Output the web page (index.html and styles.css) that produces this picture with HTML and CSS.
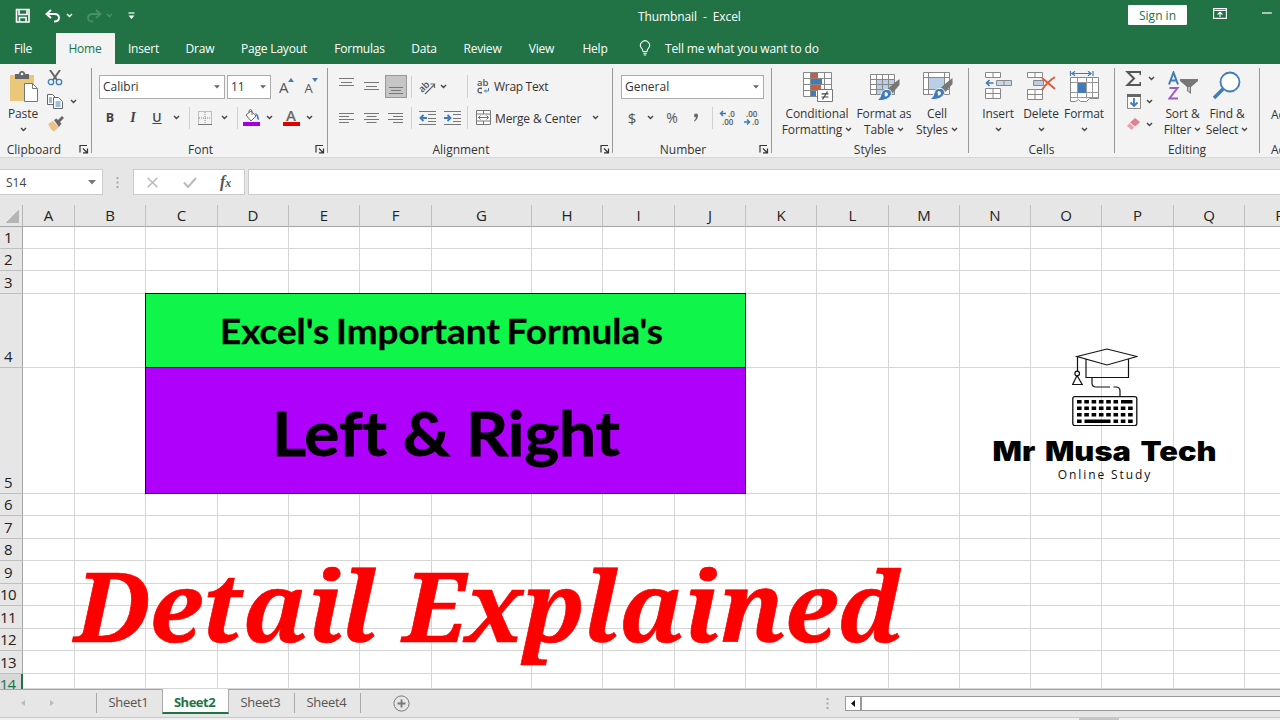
FILE: index.html
```
<!DOCTYPE html>
<html lang="en">
<head>
  <meta charset="UTF-8">
  <title>Thumbnail - Excel</title>
  <link rel="stylesheet" href="styles.css">
</head>
<body>

  <svg class="defs" width="0" height="0">
    <symbol id="chev" viewBox="0 0 7 5"><path d="M1 1l2.500 2.500L6 1" fill="none" stroke="currentColor" stroke-width="1.400"/></symbol>
    <symbol id="tri" viewBox="0 0 6 4"><path d="M0 .3h6L3 3.600z" fill="currentColor"/></symbol>
    <symbol id="launch" viewBox="0 0 10 10"><path d="M1 8.500V1.500h7M4 4.500l4 4M8.500 4.500v4.300h-4.500" fill="none" stroke="#333" stroke-width="1.200"/></symbol>
    <symbol id="brush" viewBox="0 0 24 24"><path d="M23.500 1v6l-7 8-5-4 8-7z" fill="#777"/><path d="M9 11.500q7-1 6.500 5-3 7-15 6 4-2 4.500-6 1-5 4-5z" fill="#3f7cb8" stroke="#f2f2f2"/><path d="M9 14q3 0 3 3-1 1.500-3 1.500-1-2 0-4.500z" fill="#fff"/></symbol>
  </svg>

  <header class="titlebar">
    <div class="quick">
      <svg width="16" height="16" viewBox="0 0 16 16"><path d="M1.500 1.500h12.500v12.500H1.500zM4 1.500v5h8v-5M4.500 14v-4.500h6.500V14" fill="none" stroke="#fff" stroke-width="1.600"/></svg>
      <svg class="undo" width="16" height="14" viewBox="0 0 16 14"><path d="M6 1L1.500 5 6 9M2 5h7.500q4.500 0 4.500 3.800T9 12.500" fill="none" stroke="#fff" stroke-width="1.900"/></svg>
      <svg class="chev" width="7" height="5"><use href="#chev"/></svg>
      <svg class="redo" width="16" height="14" viewBox="0 0 16 14"><path d="M10 1l4.500 4L10 9M14 5H6.500Q2 5 2 8.800T7 12.500" fill="none" stroke="currentColor" stroke-width="1.800"/></svg>
      <svg class="chev dim" width="7" height="5"><use href="#chev"/></svg>
      <svg class="more" width="7" height="8" viewBox="0 0 7 8"><path d="M0.500 1h6" stroke="#fff" stroke-width="1.200"/><path d="M.5 3.500h6l-3 3.500z" fill="#fff"/></svg>
    </div>
    <div class="doc-name">Thumbnail&nbsp; -&nbsp; Excel</div>
    <button class="signin">Sign in</button>
    <svg class="ribbon-opt" width="14" height="11" viewBox="0 0 14 11"><path d="M.6.600h12.800v9.800H.6zM.6 2.500h12.800M7 9V4.500M4.500 6.500L7 4.300l2.500 2.200" fill="none" stroke="#fff" stroke-width="1.100"/></svg>
    <svg class="minimize" width="10" height="2"><path d="M0 1h10" stroke="#fff" stroke-width="1.200"/></svg>
  </header>

  <nav class="tabs">
    <a class="tab file">File</a>
    <a class="tab home">Home</a>
    <a class="tab insert">Insert</a>
    <a class="tab draw">Draw</a>
    <a class="tab layout">Page Layout</a>
    <a class="tab formulas">Formulas</a>
    <a class="tab data">Data</a>
    <a class="tab review">Review</a>
    <a class="tab view">View</a>
    <a class="tab help">Help</a>
    <svg class="bulb" width="12" height="16" viewBox="0 0 12 16"><path d="M4 11.500Q4 9.500 2.500 8.200A4.500 4.500 0 1 1 9.500 8.200Q8 9.500 8 11.500zM4.200 13.200h3.600M4.800 15h2.400" fill="none" stroke="#fff" stroke-width="1.100"/></svg>
    <span class="tell">Tell me what you want to do</span>
  </nav>

  <section class="ribbon">
    <!-- Clipboard -->
    <div class="group clipboard">
      <div class="body">
        <div class="big">
          <svg width="30" height="32" viewBox="0 0 30 32"><path d="M1 4h24v26H1z" fill="#ebc77c"/><path d="M6 3h4q0-3 3-3t3 3h4v5H6z" fill="#666"/><circle cx="13" cy="3" r="1.300" fill="#f2f2f2"/><path d="M15.500 12.500h8l5 5v13h-13z" fill="#fff" stroke="#777"/><path d="M23.500 12.500v5h5" fill="none" stroke="#777"/></svg>
          <span>Paste</span>
          <svg class="chev" width="7" height="5"><use href="#chev"/></svg>
        </div>
        <div class="stack">
          <div class="cell"><svg width="16" height="16" viewBox="0 0 16 16"><path d="M3 0l7 10M13 0L6 10" stroke="#666" stroke-width="2"/><circle cx="4" cy="12" r="2.700" fill="none" stroke="#3f7cb8" stroke-width="1.300"/><circle cx="12" cy="12" r="2.700" fill="none" stroke="#3f7cb8" stroke-width="1.300"/></svg></div>
          <div class="cell"><svg width="16" height="15" viewBox="0 0 16 15"><path d="M.5.500h5l3 3v7h-8z" fill="#fff" stroke="#666"/><path d="M6.500 3.500h5l4 4v7h-9z" fill="#fff" stroke="#666"/><path d="M2 4h3M2 6h3M2 8h3M8.500 8h5M8.500 10h5M8.500 12h5" stroke="#3f7cb8"/></svg><svg class="chev" width="7" height="5"><use href="#chev"/></svg></div>
          <div class="cell"><svg width="17" height="16" viewBox="0 0 17 16"><path d="M1 8l5-3 6 6-5 4.500q-3-1-6-7.500z" fill="#ebc38a"/><path d="M7 4l2.500-1.500L11 4l4-4 2 2-4 4 1.500 1.500L12 11z" fill="#666"/></svg></div>
        </div>
      </div>
      <div class="title"><span>Clipboard</span><svg width="10" height="10"><use href="#launch"/></svg></div>
    </div>

    <!-- Font -->
    <div class="group font">
      <div class="body rows">
        <div class="row">
          <div class="select family">Calibri<svg width="6" height="4"><use href="#tri"/></svg></div>
          <div class="select size">11<svg width="6" height="4"><use href="#tri"/></svg></div>
          <span class="grow">A<svg width="6" height="4" viewBox="0 0 6 4"><path d="M0 4l3-4 3 4z" fill="#3f7cb8"/></svg></span>
          <span class="grow shrink">A<svg width="6" height="4" viewBox="0 0 6 4"><path d="M0 0h6L3 4z" fill="#3f7cb8"/></svg></span>
        </div>
        <div class="row tools">
          <b>B</b>
          <i>I</i>
          <u>U</u>
          <svg class="chev" width="7" height="5"><use href="#chev"/></svg>
          <span class="sep"></span>
          <svg width="14" height="14" viewBox="0 0 14 14"><path d="M.5.500h13v13H.5zM7 1v12M1 7h12" fill="none" stroke="#888" stroke-dasharray="1 1"/><path d="M0 13.500h14" stroke="#777"/></svg>
          <svg class="chev" width="7" height="5"><use href="#chev"/></svg>
          <span class="sep"></span>
          <svg width="17" height="17" viewBox="0 0 17 17"><path d="M3 6l5-4 5 5-5 5z" fill="#fff" stroke="#666"/><path d="M6 4V1.500q1.500-2 3 0V6" fill="none" stroke="#666"/><path d="M12 4q4 1 4 7-2 0-2-3z" fill="#3f7cb8"/><path d="M0 13h17v4H0z" fill="#a000e0"/></svg>
          <svg class="chev" width="7" height="5"><use href="#chev"/></svg>
          <span class="font-color">A</span>
          <svg class="chev" width="7" height="5"><use href="#chev"/></svg>
        </div>
      </div>
      <div class="title"><span>Font</span><svg width="10" height="10"><use href="#launch"/></svg></div>
    </div>

    <!-- Alignment -->
    <div class="group alignment">
      <div class="body">
        <div class="rows align-left">
          <div class="row">
            <svg width="15" height="23" viewBox="0 0 15 23"><path d="M0 3.500h15M2 7.500h11M0 10.500h15" stroke="#777"/></svg>
            <svg width="15" height="23" viewBox="0 0 15 23"><path d="M0 7.500h15M2 11.500h11M0 14.500h15" stroke="#777"/></svg>
            <svg class="active" width="22" height="23" viewBox="0 0 22 23"><path d="M4 12.500h14M6 15.500h10M4 18.500h14" stroke="#777"/></svg>
            <span class="sep"></span>
            <svg class="loose" width="17" height="17" viewBox="0 0 17 17"><text class="tiny-ab" x="-1" y="11" transform="rotate(-45 6 8)">ab</text><path d="M6 16l9-9M11.500 6h4v4" fill="none" stroke="#666" stroke-width="1.200"/></svg>
            <svg class="chev" width="7" height="5"><use href="#chev"/></svg>
          </div>
          <div class="row second">
            <svg width="15" height="12" viewBox="0 0 15 12"><path d="M0 1.500h15M0 4.500h10M0 7.500h15M0 10.500h10" stroke="#777"/></svg>
            <svg width="15" height="12" viewBox="0 0 15 12"><path d="M0 1.500h15M2.500 4.500h10M0 7.500h15M2.500 10.500h10" stroke="#777"/></svg>
            <svg width="15" height="12" viewBox="0 0 15 12"><path d="M0 1.500h15M5 4.500h10M0 7.500h15M5 10.500h10" stroke="#777"/></svg>
            <span class="sep"></span>
            <svg width="17" height="14" viewBox="0 0 17 14"><path d="M0 .5h17M9 3.500h8M9 7.500h8M9 10.500h8M0 13.500h17" stroke="#777"/><path d="M8 7H1.500M4.500 4l-3 3 3 3" fill="none" stroke="#3f7cb8" stroke-width="1.900"/></svg>
            <svg width="17" height="14" viewBox="0 0 17 14"><path d="M0 .5h17M9 3.500h8M9 7.500h8M9 10.500h8M0 13.500h17" stroke="#777"/><path d="M0 7h6.500M3.500 4l3 3-3 3" fill="none" stroke="#3f7cb8" stroke-width="1.900"/></svg>
          </div>
        </div>
        <div class="rows align-right">
          <div class="row">
            <svg class="loose" width="13" height="17" viewBox="0 0 13 17"><text class="tiny-ab" x="0" y="8">ab</text><path d="M5 10.500Q1 9.500 1 12.500T5 14.500" fill="none" stroke="#555" stroke-width="1.300"/><path d="M11.500 10v3H7.500M9 11.500L7.500 13 9 14.500" fill="none" stroke="#3f7cb8"/></svg>
            <span class="wrap">Wrap Text</span>
          </div>
          <div class="row second">
            <svg width="15" height="15" viewBox="0 0 15 15"><path d="M.5.500h14v14H.5zM.5 4h14M.5 11h14M7.500.500V4M7.500 11v3.500" fill="#fff" stroke="#777"/><path d="M2.500 7.500h10M4.500 5.500l-2 2 2 2M10.500 5.500l2 2-2 2" fill="none" stroke="#3f7cb8"/></svg>
            <span class="merge">Merge &amp; Center</span>
            <svg class="chev" width="7" height="5"><use href="#chev"/></svg>
          </div>
        </div>
      </div>
      <div class="title"><span>Alignment</span><svg width="10" height="10"><use href="#launch"/></svg></div>
    </div>

    <!-- Number -->
    <div class="group number">
      <div class="body rows">
        <div class="row"><div class="select format">General<svg width="6" height="4"><use href="#tri"/></svg></div></div>
        <div class="row tools">
          <span class="sym">$</span>
          <svg class="chev" width="7" height="5"><use href="#chev"/></svg>
          <span class="sym percent">%</span>
          <svg width="6" height="9" viewBox="0 0 6 9"><path d="M1 2.500a2 2 0 1 1 4 0Q5 6 1.500 8.500l-.5-1Q3 6 3 4.500 1 4.500 1 2.500z" fill="#666"/></svg>
          <span class="sep"></span>
          <svg class="loose" width="16" height="18" viewBox="0 0 16 18"><text class="dec" x="9" y="8">.0</text><text class="dec" x="3" y="16">.00</text><path d="M7 4.500H1.500M4 2L1.500 4.500 4 7" fill="none" stroke="#3f7cb8" stroke-width="1.500"/></svg>
          <svg class="loose" width="16" height="18" viewBox="0 0 16 18"><text class="dec" x="3" y="8">.00</text><text class="dec" x="9" y="16">.0</text><path d="M1 13h5.500M4 10.500L6.500 13 4 15.500" fill="none" stroke="#3f7cb8" stroke-width="1.500"/></svg>
        </div>
      </div>
      <div class="title"><span>Number</span><svg width="10" height="10"><use href="#launch"/></svg></div>
    </div>

    <!-- Styles -->
    <div class="group styles">
      <div class="body">
        <div class="big conditional">
          <svg width="31" height="32" viewBox="0 0 31 32"><path d="M.5 1.500h28v24H.5z" fill="#fff"/><path d="M8 1.500h7v6H8zM8 14h10v5H8z" fill="#cb5c44"/><path d="M8 8h11v6H8zM8 20h5v5H8z" fill="#3f7cb8"/><path d="M.5 1.500h28v24H.5zM.5 7.500h28M.5 13.500h28M.5 19.500h28M7.500 1.500v24M21.500 1.500v24" fill="none" stroke="#888"/><path d="M14.500 18.500h15v12h-15z" fill="#fff" stroke="#777"/><path d="M18.500 22.800h7M18.500 26h7M24.500 20.500l-5 8" stroke="#444" stroke-width="1.200"/></svg>
          <span>Conditional<br>Formatting <svg class="chev" width="7" height="5"><use href="#chev"/></svg></span>
        </div>
        <div class="big">
          <svg class="table-icon" width="31" height="32" viewBox="0 0 31 32"><path d="M.5 3.500h24v20H.5z" fill="#fff"/><path d="M7 9h18v15H7z" fill="#b9cfe6"/><path d="M.5 3.500h24v20H.5zM.5 8.500h24M.5 13.500h24M.5 18.500h24M6.500 3.500v20M12.500 3.500v20M18.500 3.500v20" fill="none" stroke="#888"/><use href="#brush" x="6" y="7" width="24" height="24"/></svg>
          <span>Format as<br>Table <svg class="chev" width="7" height="5"><use href="#chev"/></svg></span>
        </div>
        <div class="big">
          <svg class="table-icon" width="31" height="32" viewBox="0 0 31 32"><path d="M.5 1.500h26v22H.5zM.5 6.500h26M.5 18.500h26M5.500 1.500v22M21.500 1.500v22" fill="#fff" stroke="#888"/><path d="M6 7h15v11H6z" fill="#b9cfe6"/><use href="#brush" x="6" y="6" width="24" height="24"/></svg>
          <span>Cell<br>Styles <svg class="chev" width="7" height="5"><use href="#chev"/></svg></span>
        </div>
      </div>
      <div class="title"><span>Styles</span></div>
    </div>

    <!-- Cells -->
    <div class="group cells">
      <div class="body">
        <div class="big">
          <svg width="28" height="32" viewBox="0 0 28 32"><path d="M1.500 1.500h15v5h-15zM9 1.500v5M1.500 17.500h15v10h-15zM1.500 22.500h15M9 17.500v10" fill="#fff" stroke="#888"/><path d="M12.500 9.500h15v5h-15zM20 9.500v5" fill="#c6d7e8" stroke="#888"/><path d="M9.500 12H2.500M5.500 9l-3 3 3 3" fill="none" stroke="#3f7cb8" stroke-width="1.700"/></svg>
          <span>Insert</span>
          <svg class="chev" width="7" height="5"><use href="#chev"/></svg>
        </div>
        <div class="big">
          <svg width="30" height="32" viewBox="0 0 30 32"><path d="M1.500 1.500h15v5h-15zM9 1.500v5M1.500 18.500h15v10h-15zM1.500 23.500h15M9 18.500v10" fill="#fff" stroke="#888"/><path d="M7.500 9.500h10v5h-10z" fill="#b9cfe6" stroke="#888"/><path d="M16 7q5 4 13 11M29 6q-8 5-13 13" fill="none" stroke="#dc5b38" stroke-width="2"/></svg>
          <span>Delete</span>
          <svg class="chev" width="7" height="5"><use href="#chev"/></svg>
        </div>
        <div class="big">
          <svg width="30" height="32" viewBox="0 0 30 32"><path d="M1.500 0v5M24 0v5M3 2.500h19M6 .3L3 2.500l3 2.200M19 .3l3 2.200-3 2.200" fill="none" stroke="#3f7cb8" stroke-width="1.200"/><path d="M1.500 6.500h28v21h-9l-3 3h-6l-2-2-3 2h-5z" fill="#fff" stroke="#888"/><path d="M1.500 11.500h28M1.500 21.500h28M1.500 26.500h28M8.500 6.500v21M17.500 6.500v21M23.500 6.500v21" stroke="#999"/><path d="M9 12h8v10H9z" fill="#3f7cb8"/></svg>
          <span>Format</span>
          <svg class="chev" width="7" height="5"><use href="#chev"/></svg>
        </div>
      </div>
      <div class="title"><span>Cells</span></div>
    </div>

    <!-- Editing -->
    <div class="group editing">
      <div class="body">
        <div class="stack">
          <div class="cell"><svg width="16" height="15" viewBox="0 0 16 15"><path d="M15.500 4V1H2.500l6.500 6.500L2.500 14h13v-3" fill="none" stroke="#555" stroke-width="2"/></svg><svg class="chev sum" width="7" height="5"><use href="#chev"/></svg></div>
          <div class="cell"><svg width="16" height="16" viewBox="0 0 16 16"><path d="M2.500 1.500h13v14h-13z" fill="#fff" stroke="#888"/><path d="M2 1h14v3H2z" fill="#666"/><path d="M9 5v8M5.500 9.500L9 13l3.500-3.500" fill="none" stroke="#3f7cb8" stroke-width="1.800"/></svg><svg class="chev" width="7" height="5"><use href="#chev"/></svg></div>
          <div class="cell"><svg width="16" height="14" viewBox="0 0 16 14"><path d="M10 1l5 4-5 4.500-5-4z" fill="#e37f92"/><path d="M4.500 6.200l4.700 4L6.500 13 2 9z" fill="#e9a3b0"/></svg><svg class="chev" width="7" height="5"><use href="#chev"/></svg></div>
        </div>
        <div class="big sort">
          <svg width="30" height="32" viewBox="0 0 30 32"><path d="M12 8h18v2l-7 6v7l-4-3v-4l-7-6z" fill="#777"/><path d="M21 16v4.500" stroke="#ddd" stroke-width="1.500"/><path d="M1 13.500L5.500 1.500l4.500 12M2.500 9.500h6" fill="none" stroke="#3f7cb8" stroke-width="2"/><path d="M1.500 17h8L1.500 27.500h8.500" fill="none" stroke="#9c5cc0" stroke-width="2"/></svg>
          <span>Sort &amp;<br>Filter <svg class="chev" width="7" height="5"><use href="#chev"/></svg></span>
        </div>
        <div class="big">
          <svg width="28" height="32" viewBox="0 0 28 32"><circle cx="17" cy="11" r="9.500" fill="#fff" stroke="#3f7cb8" stroke-width="1.800"/><path d="M10 18l-9 9" stroke="#3f7cb8" stroke-width="3.600"/></svg>
          <span>Find &amp;<br>Select <svg class="chev" width="7" height="5"><use href="#chev"/></svg></span>
        </div>
      </div>
      <div class="title"><span>Editing</span></div>
    </div>

    <div class="group addins">
      <div class="body">Add-ins</div>
      <div class="title">Add-ins</div>
    </div>
  </section>

  <section class="formula-bar">
    <div class="name-box">S14<svg width="8" height="5" viewBox="0 0 8 5"><path d="M0 0h8L4 4.500z" fill="#777"/></svg></div>
    <svg class="dots" width="3" height="13" viewBox="0 0 3 13"><path d="M1.500 1v11" stroke="#aaa" stroke-width="2" stroke-dasharray="2 2.500"/></svg>
    <div class="fx-box">
      <svg width="11" height="11" viewBox="0 0 11 11"><path d="M.7.700l9.600 9.600M10.300.700L.7 10.300" stroke="#bbb" stroke-width="1.600"/></svg>
      <svg width="14" height="11" viewBox="0 0 14 11"><path d="M1 5.500l4 4.500 8-9" fill="none" stroke="#bbb" stroke-width="2"/></svg>
      <span class="fx">f<small>x</small></span>
    </div>
    <div class="formula-input"></div>
  </section>

  <main class="sheet" id="sheet">
    <div class="merged heading"><svg width="599" height="73"><text x="74" y="49.500" textLength="443" lengthAdjust="spacingAndGlyphs">Excel's Important Formula's</text></svg></div>
    <div class="merged topic"><svg width="599" height="125"><text x="126" y="87.500" textLength="348" lengthAdjust="spacingAndGlyphs">Left &amp; Right</text></svg></div>
    <svg class="banner" width="860" height="130"><text x="14.500" y="91.500" textLength="828" lengthAdjust="spacingAndGlyphs">Detail Explained</text></svg>
    <div class="brand">
      <svg width="66" height="78" viewBox="0 0 66 78">
        <path d="M5 8.500L35 1l30 7.500L35 17zM14 11v18.500h42.500V11M5.500 8.500v15M5 27.500L.7 36.500h9.500zM20 30v5q0 4 4 4h14M41.500 39H44q4 0 4 4v5" fill="none" stroke="#111" stroke-width="1.200"/>
        <circle cx="5.200" cy="25.500" r="2.300" fill="#fff" stroke="#111" stroke-width="1.200"/>
        <rect x=".8" y="48.600" width="64" height="29" rx="2" fill="none" stroke="#111" stroke-width="1.300"/>
        <path d="M5 53.800h41.700M5 60.300h56M5 66.800h56M5 73.200h4.700M41.500 73.200H61" stroke="#000" stroke-width="3.600" stroke-dasharray="4.600 2.700"/>
        <path d="M49 53.800h11.500M12.500 73.200h26" stroke="#000" stroke-width="3.600"/>
      </svg>
      <svg width="230" height="27"><text class="brand-name" x="2.500" y="22" textLength="224" lengthAdjust="spacingAndGlyphs">Mr Musa Tech</text></svg>
      <span>Online Study</span>
    </div>
  </main>

  <footer class="sheet-tabs">
    <svg class="nav-prev" width="4" height="6" viewBox="0 0 4 6"><path d="M4 0v6L0 3z" fill="#bbb"/></svg>
    <svg class="nav-next" width="4" height="6" viewBox="0 0 4 6"><path d="M0 0v6l4-3z" fill="#bbb"/></svg>
    <span class="sheet-tab first">Sheet1</span>
    <span class="sheet-tab current">Sheet2</span>
    <span class="sheet-tab">Sheet3</span>
    <span class="sheet-tab">Sheet4</span>
    <svg class="add" width="17" height="17" viewBox="0 0 17 17"><circle cx="8.500" cy="8.500" r="7.600" fill="none" stroke="#777"/><path d="M8.500 4.500v8M4.500 8.500h8" stroke="#777" stroke-width="1.800"/></svg>
    <svg class="dots" width="3" height="13" viewBox="0 0 3 13"><path d="M1.500 1v11" stroke="#aaa" stroke-width="2" stroke-dasharray="2 2.500"/></svg>
    <div class="scrollbar"><div class="scroll-left"><svg width="4" height="7" viewBox="0 0 4 7"><path d="M4 0v7L0 3.500z" fill="#111"/></svg></div></div>
  </footer>
  <div class="statusbar"><div class="view-mode"></div></div>

  <script>
    const sheet = document.getElementById("sheet");
    const columns = "ABCDEFGHIJKLMNOPQR";

    function addCell(row, col, cls, text) {
      const cell = document.createElement("div");
      cell.className = cls;
      cell.style.gridArea = (row + 1) + " / " + (col + 1);
      cell.textContent = text;
      sheet.prepend(cell);
    }

    for (let row = 0; row <= 14; row++) {
      for (let col = 0; col <= columns.length; col++) {
        if (row === 0 && col === 0) addCell(row, col, "corner", "");
        else if (row === 0) addCell(row, col, "col-head", columns[col - 1]);
        else if (col === 0) addCell(row, col, row === 14 ? "row-head selected" : "row-head", row);
        else addCell(row, col, "grid-cell", "");
      }
    }
  </script>

</body>
</html>
```
FILE: styles.css
```
* {
  box-sizing: border-box;
}

body {
  margin: 0;
  width: 1280px;
  height: 720px;
  overflow: hidden;
  font-family: "Open Sans", "Noto Sans", sans-serif;
  font-size: 12px;
  color: #333;
  background: #e6e6e6;
}

svg {
  display: block;
  flex: none;
}

.defs {
  position: absolute;
}

.loose {
  overflow: visible;
}

.chev {
  color: #444;
}

/* title bar */
.titlebar {
  display: flex;
  height: 33px;
  background: #217346;
  color: #fff;
}

.titlebar .chev {
  color: #fff;
}

.quick {
  display: flex;
  align-items: center;
  width: 638px;
  height: 31px;
  padding-left: 15px;
}

.undo {
  margin: 0 5px 0 14px;
}

.redo {
  margin: 0 4px 0 13px;
  color: #4a8f69;
}

.titlebar .dim {
  color: #4a8f69;
}

.more {
  margin-left: 15px;
}

.doc-name {
  width: 490px;
  line-height: 33px;
  letter-spacing: -0.1px;
}

.signin {
  width: 59px;
  height: 20px;
  margin-top: 5px;
  padding: 1px 0 0;
  border: none;
  border-radius: 1px;
  background: #fff;
  color: #217346;
  font: 12px "Open Sans", sans-serif;
}

.ribbon-opt {
  margin: 8px 35px 0 26px;
}

.minimize {
  margin-top: 12px;
}

/* tabs */
.tabs {
  display: flex;
  height: 31px;
  background: #217346;
  color: #fff;
  line-height: 31px;
}

.tab {
  text-align: center;
  white-space: nowrap;
  letter-spacing: -0.2px;
}

.file {
  width: 46px;
  margin-right: 10px;
}

.home {
  width: 59px;
  padding-right: 1px;
  background: #f3f3f3;
  color: #217346;
}

.insert { width: 57px; }
.draw { width: 56px; }
.layout { width: 92px; }
.formulas { width: 79px; }
.data { width: 50px; }
.review { width: 67px; }
.view { width: 51px; }
.help { width: 56px; }

.bulb {
  margin: 7px 14px 0 16px;
}

.tell {
  letter-spacing: -0.15px;
}

/* ribbon */
.ribbon {
  display: flex;
  height: 94px;
  padding-top: 4px;
  background: #f3f3f3;
  border-bottom: 1px solid #d8d8d8;
}

.group {
  flex: none;
  height: 85px;
  border-right: 1px solid #999;
}

.body {
  display: flex;
  height: 74px;
}

.rows {
  display: flex;
  flex-direction: column;
  padding-top: 7px;
}

.row {
  display: flex;
  align-items: center;
  height: 23px;
}

.tools,
.second {
  height: 23px;
  margin-top: 8px;
}

.title {
  display: flex;
  height: 14px;
  line-height: 15px;
}

.title span {
  flex: 1;
  padding-right: 6px;
  text-align: center;
}

.title svg {
  margin: 2px 2px 0 0;
}

.clipboard { width: 92px; }
.font { width: 236px; }
.alignment { width: 285px; }
.number { width: 159px; }
.styles { width: 197px; }
.cells { width: 146px; }
.editing { width: 145px; }

.clipboard .title span { padding-right: 11px; }
.styles .title span,
.cells .title span,
.editing .title span { padding-right: 0; }

.big {
  display: flex;
  flex-direction: column;
  align-items: center;
  padding-top: 3px;
  line-height: 16px;
  text-align: center;
  white-space: nowrap;
}

.big > svg:first-child {
  margin-bottom: 3px;
}

.big span {
  letter-spacing: -0.1px;
}

.big span svg {
  display: inline-block;
  margin-bottom: 2px;
}

.big > .chev {
  margin-top: 5px;
}

.clipboard .big {
  width: 46px;
  padding-left: 2px;
}

.clipboard .big span,
.clipboard .big .chev {
  margin-right: 2px;
}

.stack {
  display: flex;
  flex-direction: column;
  gap: 3px;
}

.clipboard .stack {
  padding-left: 1px;
}

.cell {
  display: flex;
  align-items: center;
  height: 20px;
  gap: 7px;
}

.editing .cell {
  gap: 5px;
}

.select {
  display: flex;
  align-items: center;
  justify-content: space-between;
  height: 24px;
  padding: 0 4px 0 3px;
  background: #fff;
  border: 1px solid #ababab;
  color: #333;
}

.select svg {
  color: #666;
}

.sep {
  width: 1px;
  height: 22px;
  background: #d0d0d0;
}

.font.group .body {
  padding-left: 7px;
}

.family {
  width: 126px;
  margin-right: 2px;
}

.size {
  width: 44px;
}

.grow {
  display: flex;
  align-items: flex-start;
  margin-left: 8px;
  height: 20px;
  font-size: 15px;
  line-height: 21px;
  color: #555;
}

.grow svg {
  margin-top: 1px;
  margin-left: -1px;
}

.shrink {
  margin-left: 11px;
  font-size: 13px;
  line-height: 22px;
}

.font .tools {
  display: grid;
  grid-template-columns: 22px 24px 24px 14px 12px 20px 18px 8px 21px 14px 30px 6px;
  justify-items: center;
  color: #444;
  font-size: 12.5px;
}

.font .tools i {
  font-family: "Liberation Serif", serif;
  font-size: 14px;
  font-weight: bold;
}

.font .tools u {
  font-weight: 600;
}

.font-color {
  width: 17px;
  height: 17px;
  border-bottom: 4px solid #e00000;
  font-size: 15px;
  line-height: 13px;
  font-weight: 600;
  text-align: center;
  color: #666;
}

.align-left {
  width: 140px;
  padding-left: 6px;
}

.align-left .row {
  display: grid;
  grid-template-columns: 25px 24px 25px 7px 25px 6px;
  justify-items: center;
}

.align-left .second {
  grid-template-columns: 25px 24px 25px 7px 25px 24px;
}

.active {
  background: #c6c6c6;
  outline: 1px solid #999;
  outline-offset: -1px;
}

.align-right {
  width: 144px;
  height: 62px;
}

.align-right .row {
  margin-left: -1px;
  padding-left: 9px;
  border-left: 1px solid #d0d0d0;
}

.align-right .second {
  padding-left: 8px;
}

.wrap {
  margin-left: 4px;
  letter-spacing: -0.3px;
}

.merge {
  width: 97px;
  margin-left: 4px;
  padding-top: 1px;
  letter-spacing: -0.15px;
  white-space: nowrap;
}

.tiny-ab {
  font-size: 9.5px;
  font-weight: 600;
  fill: #555;
}

.format {
  width: 143px;
  margin-left: 8px;
}

.number .tools {
  display: grid;
  grid-template-columns: 20px 16px 28px 20px 12px 18px 30px;
  justify-items: center;
  padding-left: 9px;
}

.sym {
  font-size: 15px;
  line-height: 18px;
  color: #555;
}

.percent {
  font-size: 14px;
}

.dec {
  font-size: 8px;
  font-weight: 600;
  fill: #555;
}

.styles .body {
  display: grid;
  grid-template-columns: 82px 52px 54px;
  padding-left: 4px;
}

.conditional > svg:first-child {
  margin-left: 3px;
}

.table-icon {
  margin-left: 3px;
}

.cells .body {
  display: grid;
  grid-template-columns: 42px 44px 42px;
  padding-left: 8px;
}

.editing .body {
  display: grid;
  grid-template-columns: 35px 45px 44px;
  padding-left: 10px;
}

.editing .sum {
  margin-left: 2px;
}

.addins {
  width: 60px;
  padding-left: 11px;
  border: none;
}

.addins .body {
  padding-top: 38px;
  white-space: nowrap;
}

/* formula bar */
.formula-bar {
  display: flex;
  height: 47px;
  padding-top: 11px;
}

.name-box,
.fx-box,
.formula-input {
  display: flex;
  align-items: center;
  height: 26px;
  background: #fff;
  border: 1px solid #cbcbcb;
}

.name-box {
  justify-content: space-between;
  width: 103px;
  padding: 0 6px;
  border-left: none;
  color: #444;
}

.formula-bar .dots {
  margin: 7px 14px 0 13px;
}

.fx-box {
  width: 112px;
  padding-left: 13px;
}

.fx-box svg + svg {
  margin: 0 23px 0 25px;
}

.fx {
  font: italic bold 16px/18px "Liberation Serif", serif;
  color: #555;
}

.fx small {
  font-size: 12px;
}

.formula-input {
  flex: 1;
  margin-left: 3px;
  border-right: none;
}

/* grid */
.sheet {
  position: relative;
  display: grid;
  grid-template-columns: 23px 52px 71px 72px 71px 71px 72px 100px 71px 72px 71px 71px 72px 71px 71px 71px 72px 71px 71px;
  grid-template-rows: 22px 22px 22px 23px 74px 126px 22px 23px 22px 23px 22px 23px 22px 23px 15px;
  height: 484px;
  overflow: hidden;
}

.grid-cell {
  background: #fff;
  border-right: 1px solid #d6d6d6;
  border-bottom: 1px solid #d6d6d6;
}

.corner {
  border-right: 1px solid #b5b5b5;
  border-bottom: 1px solid #a5a5a5;
  background: linear-gradient(135deg, transparent 50%, #b5b5b5 50%) 6px 5px / 13px 13px no-repeat;
}

.col-head,
.row-head {
  background: #e6e6e6;
  color: #222;
  font-size: 15px;
}

.col-head {
  border-right: 1px solid #bfbfbf;
  border-bottom: 1px solid #a5a5a5;
  line-height: 20px;
  text-align: center;
}

.row-head {
  display: flex;
  align-items: flex-end;
  justify-content: center;
  padding: 0 6px 1px 0;
  border-right: 1px solid #a5a5a5;
  border-bottom: 1px solid #bfbfbf;
  line-height: 20px;
  letter-spacing: -0.7px;
}

.selected {
  align-items: flex-start;
  background: #d8d8d8;
  border-right: 2px solid #217346;
  border-bottom: none;
  color: #217346;
}

.merged {
  grid-column: 4 / 12;
  margin: -1px 0 0 -1px;
  border: 1px solid #111;
  z-index: 1;
}

.merged text {
  font-family: Lato, "Open Sans", sans-serif;
  font-weight: bold;
  font-variant-ligatures: none;
  fill: #000;
  stroke: #000;
}

.heading {
  grid-row: 5;
  background: #0ff54a;
}

.heading text {
  font-size: 34px;
  stroke-width: 0.3px;
  word-spacing: -2px;
}

.topic {
  grid-row: 6;
  background: #ae00fb;
}

.topic text {
  font-size: 62px;
  stroke-width: 0.9px;
}

/* artwork floating over the cells */
.banner {
  position: absolute;
  left: 60px;
  top: 345px;
}

.banner text {
  font-family: "Noto Serif", "Droid Serif", "DejaVu Serif Condensed", "DejaVu Serif", serif;
  font-size: 96px;
  font-style: italic;
  font-weight: bold;
  fill: #f00;
  stroke: #f00;
  stroke-width: 0.7px;
}

.brand {
  position: absolute;
  left: 990px;
  top: 143px;
  display: flex;
  flex-direction: column;
  align-items: center;
  width: 230px;
  color: #111;
}

.brand svg:first-child {
  margin-bottom: 13px;
}

.brand-name {
  font-family: Inter, "Liberation Sans", sans-serif;
  font-size: 26.5px;
  font-weight: 900;
  word-spacing: 3px;
}

.brand span {
  line-height: 18px;
  letter-spacing: 1.9px;
  font-weight: 500;
}

/* sheet tabs */
.sheet-tabs {
  display: flex;
  height: 29px;
  border-top: 1px solid #a5a5a5;
  border-bottom: 1px solid #c8c8c8;
  font-size: 13px;
  color: #555;
}

.nav-prev {
  margin: 10px 25px 0 21px;
}

.nav-next {
  margin: 10px 42px 0 0;
}

.sheet-tab {
  width: 66px;
  height: 20px;
  margin-top: 3px;
  padding-right: 2px;
  border-right: 1px solid #aaa;
  line-height: 19px;
  text-align: center;
  letter-spacing: -0.3px;
}

.first {
  border-left: 1px solid #aaa;
  border-right: none;
}

.current {
  width: 67px;
  height: 25px;
  margin-top: -1px;
  border-right: 1px solid #aaa;
  border-left: 1px solid #aaa;
  border-bottom: 2px solid #217346;
  background: #fff;
  color: #217346;
  line-height: 27px;
  font-weight: bold;
  letter-spacing: -0.5px;
}

.add {
  margin: 5px 0 0 32px;
}

.sheet-tabs .dots {
  margin: 7px 16px 0 auto;
}

.scrollbar {
  width: 435px;
  height: 15px;
  margin-top: 6px;
  background: #fff;
  border: 1px solid #999;
  border-right: none;
}

.scroll-left {
  display: flex;
  align-items: center;
  justify-content: center;
  width: 16px;
  height: 13px;
  border-right: 2px solid #999;
}

.statusbar {
  height: 2px;
  background: #f0f0f0;
}

.view-mode {
  width: 40px;
  height: 2px;
  margin-left: 1079px;
  background: #c4c4c4;
}
```
